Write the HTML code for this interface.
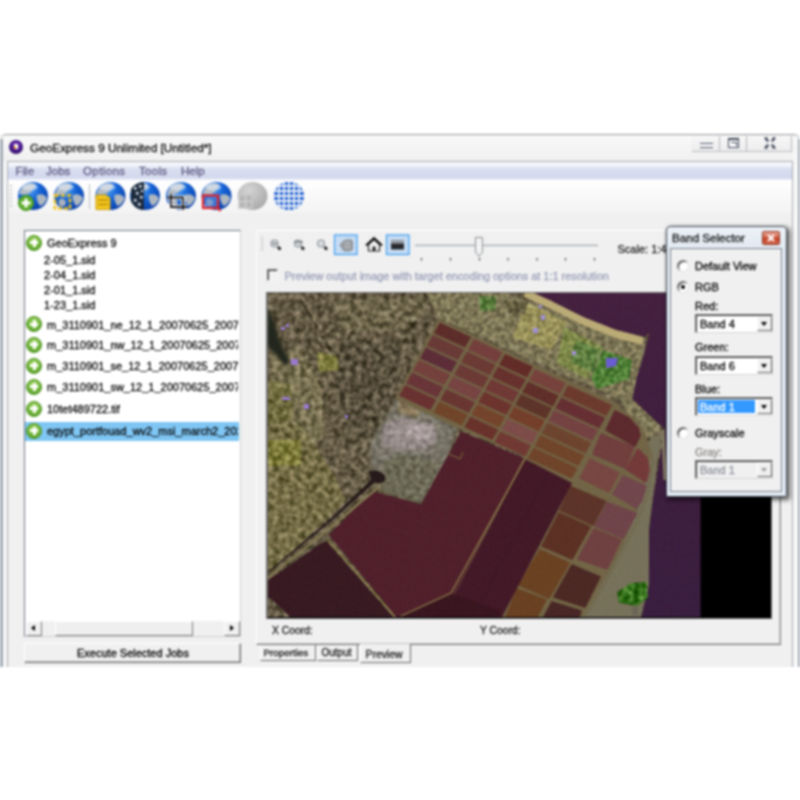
<!DOCTYPE html>
<html><head><meta charset="utf-8"><title>GeoExpress 9 Unlimited</title>
<style>
*{box-sizing:border-box}
html,body{margin:0;padding:0;background:#fff;width:800px;height:800px;overflow:hidden}
body{font-family:"Liberation Sans",sans-serif;font-size:11px;color:#000;position:relative}
.a{position:absolute}
.t{position:absolute;white-space:nowrap;line-height:14px;height:14px;-webkit-text-stroke:0.3px currentColor}
#win{left:0;top:0;width:800px;height:800px}
#winbg{left:0;top:134px;width:800px;height:533px;background:#f0f0f0;border-top:1.500px solid #979ba1;border-radius:6px 6px 0 0}
#blurwrap{position:absolute;left:0;top:0;width:800px;height:800px;filter:blur(0.85px)}
#title{left:2px;top:135.500px;width:796px;height:25px;background:linear-gradient(#f9f9f9,#f0f0f1);border-radius:5px 5px 0 0}
#menubar{left:8px;top:161.500px;width:784px;height:18px;background:linear-gradient(#fbfcfe 0%,#eef1f9 22%,#d9def0 40%,#d3d9ee 85%,#e8ebf6 100%)}
#menubar .t{top:2.500px;font-size:11.5px;color:#5c5a80}
#toolbar{left:8px;top:179.500px;width:784px;height:33.500px;background:linear-gradient(#ffffff,#f3f3f3)}
.capbtn{top:135.500px;height:16px;border-left:1px solid #b4b6ba;background:linear-gradient(#f7f7f7,#ececed)}
#list{left:23.500px;top:230px;width:217.500px;height:406.500px;background:#fff;border:1.500px solid #6e7482;border-right-color:#cfd0d2;border-bottom-color:#cfd0d2}
.li{position:absolute;left:47px;white-space:nowrap;line-height:14px;height:14px;color:#080808;-webkit-text-stroke:0.3px currentColor}
.sub{left:44px}
.ic{position:absolute;left:26px;width:16px;height:16px;border-radius:50%;background:radial-gradient(circle at 50% 35%,#a8dc6a,#5da52a 75%);border:1px solid #4d8f22}
.ic:before{content:"";position:absolute;left:5.500px;top:3px;width:3px;height:8px;background:#fff}
.ic:after{content:"";position:absolute;left:3px;top:5.500px;width:8px;height:3px;background:#fff}
.rad{width:12px;height:12px;border-radius:50%;background:#fff;border:1px solid #7a7a7a;border-right-color:#e2e2e2;border-bottom-color:#e2e2e2;box-shadow:inset 1px 1px 0 #444}
.cmb{width:78px;height:19px;background:#fff;border:1px solid #7a7a7a;border-right-color:#d4d4d4;border-bottom-color:#d4d4d4;box-shadow:inset 1px 1px 0 #404040}
.cbt{width:15px;height:15px;background:#f0f0f0;border:1px solid #fff;border-right-color:#606060;border-bottom-color:#606060}
.cbt:after{content:"";position:absolute;left:3px;top:5px;border:3.5px solid transparent;border-top:4px solid #000;border-bottom:0}
.cbt.dis:after{border-top-color:#9a9a9a}
</style></head><body>
<div id="blurwrap">
<div id="win" class="a">
  <div id="winbg" class="a"></div>
  <div id="title" class="a"></div>
  <!-- app icon -->
  <div class="a" style="left:8.500px;top:139.500px;width:14.500px;height:14.500px;border-radius:50%;background:radial-gradient(circle at 50% 40%,#7a3ac0 0,#4a1a90 45%,#1c0a3c 100%)"></div>
  <div class="a" style="left:14px;top:144px;width:4px;height:5px;background:#f0a020;border-top:2px solid #fff;border-right:2px solid #fff"></div>
  <div class="t" style="left:30px;top:140.500px;font-size:11.8px;color:#0a0a0a">GeoExpress 9 Unlimited [Untitled*]</div>
  <!-- caption buttons -->
  <div class="a capbtn" style="left:691px;width:28px;border-left:none;border-radius:0 0 0 4px"></div>
  <div class="a capbtn" style="left:719px;width:27px"></div>
  <div class="a capbtn" style="left:746px;width:46px;border-right:1px solid #b4b6ba"></div>
  <div class="a" style="left:692px;top:151px;width:100px;height:1px;background:#b9bbbf"></div>
  <div class="a" style="left:700px;top:143px;width:12.500px;height:4.500px;border-top:1.500px solid #3c4356;border-bottom:1.500px solid #3c4356;background:#fff"></div>
  <div class="a" style="left:727.500px;top:138px;width:11.500px;height:9.500px;border:1.500px solid #3c4356;border-top-width:2.500px;background:#fff"></div>
  <div class="a" style="left:731px;top:141.500px;width:5.500px;height:4px;border-top:1.500px solid #3c4356;border-right:1.500px solid #3c4356"></div>
  <svg class="a" style="left:763px;top:137px" width="14" height="12" viewBox="0 0 14 12"><path d="M2.500 1.500 L11.500 10.500 M11.500 1.500 L2.500 10.500" stroke="#3c4356" stroke-width="2.200" fill="none"/><rect x="5" y="4" width="4" height="4" fill="#f4f4f4"/><path d="M1.500 1 h3 M9.500 1 h3 M1.500 11 h3 M9.500 11 h3" stroke="#3c4356" stroke-width="1.400"/></svg>
  <div class="a" style="left:7px;top:160.500px;width:786px;height:1px;background:#a6a8ac"></div>
  <div id="menubar" class="a">
    <div class="t" style="left:7.500px">File</div>
    <div class="t" style="left:38px">Jobs</div>
    <div class="t" style="left:75px;letter-spacing:0.4px">Options</div>
    <div class="t" style="left:131px;letter-spacing:0.3px">Tools</div>
    <div class="t" style="left:173px">Help</div>
  </div>
  <div id="toolbar" class="a"></div>
    <svg class="a" style="left:0;top:180px" width="320" height="34" viewBox="0 0 320 34">
    <defs>
      <radialGradient id="gb" cx="38%" cy="30%" r="75%"><stop offset="0" stop-color="#5aa4f2"/><stop offset="0.45" stop-color="#1565d8"/><stop offset="1" stop-color="#0a3ea8"/></radialGradient>
      <radialGradient id="gg" cx="38%" cy="30%" r="75%"><stop offset="0" stop-color="#d4d4d4"/><stop offset="1" stop-color="#a9a9a9"/></radialGradient>
      <g id="globe">
        <ellipse cx="0" cy="0" rx="15" ry="14" fill="url(#gb)"/>
        <path d="M-13 -5 C-10 -12 -3 -14 2 -12 C4 -9 0 -7 -2 -4 C-5 -1 -10 -1 -14 -2 Z" fill="#b4bcc6"/>
        <path d="M4 -1 C8 -3 12 -1 14 2 C13 6 10 9 7 10 C5 7 3 3 4 -1 Z" fill="#aeb7c0"/>
        <path d="M-9 3 C-6 2 -3 4 -3 7 C-4 10 -7 12 -9 10 C-11 8 -11 5 -9 3 Z" fill="#a9b2bc"/>
        <ellipse cx="-3" cy="-9" rx="8" ry="3.5" fill="#e8f0fa" opacity="0.55"/>
      </g>
    </defs>
    <!-- gripper -->
    <g fill="#b4b8be"><rect x="10" y="5" width="2" height="1.5"/><rect x="10" y="9" width="2" height="1.5"/><rect x="10" y="13" width="2" height="1.5"/><rect x="10" y="17" width="2" height="1.5"/><rect x="10" y="21" width="2" height="1.5"/><rect x="10" y="25" width="2" height="1.5"/></g>
    <use href="#globe" x="33" y="16"/>
    <circle cx="26" cy="23" r="7.5" fill="#5cae2c" stroke="#3f8a1c" stroke-width="1"/>
    <path d="M26 18.5 V27.5 M21.5 23 H30.5" stroke="#fff" stroke-width="3"/>
    <use href="#globe" x="69" y="16"/>
    <rect x="55" y="15.500" width="15" height="13" fill="none" stroke="#f2c41a" stroke-width="2.6" stroke-dasharray="4 2"/>
    <rect x="89" y="4" width="1" height="25" fill="#b9bcc2"/>
    <use href="#globe" x="110.5" y="16"/>
    <path d="M96 15 H106 L110 18 V29.500 H96 Z" fill="#f4c81e" stroke="#c99a10" stroke-width="1"/>
    <path d="M98 20 H108 M98 24.500 H108" stroke="#b98a0c" stroke-width="1.6"/>
    <use href="#globe" x="145" y="16"/>
    <path d="M131 9 C135 3 141 2 144 2 L144 30 C138 30 133 26 131 21 Z" fill="#1c2a3c"/>
    <g fill="#dfe6f0"><rect x="134" y="7" width="2.5" height="2.5"/><rect x="139" y="5" width="2.5" height="2.5"/><rect x="136" y="12" width="2.5" height="2.5"/><rect x="140" y="16" width="2.5" height="2.5"/><rect x="134" y="19" width="2.5" height="2.5"/><rect x="138" y="23" width="2.5" height="2.5"/><rect x="141" y="10" width="2" height="2"/></g>
    <use href="#globe" x="181" y="16"/>
    <path d="M171 13.500 V27 H187 M167 17.500 H183 V30" stroke="#fff" stroke-width="4" fill="none"/>
    <path d="M171 13.500 V27 H187 M167 17.500 H183 V30" stroke="#15181c" stroke-width="1.8" fill="none"/>
    <use href="#globe" x="216.5" y="16"/>
    <rect x="203" y="15.500" width="15" height="12.500" fill="#5a86d8" fill-opacity="0.55" stroke="#e0222a" stroke-width="2.2"/>
    <path d="M218 28 L220.500 31" stroke="#e0222a" stroke-width="2"/>
    <!-- disabled -->
    <ellipse cx="252.5" cy="16" rx="15" ry="14" fill="url(#gg)"/>
    <rect x="239" y="15" width="13" height="13" fill="#b5b5b5" stroke="#c9c9c9" stroke-width="1.5"/>
    <path d="M245.500 15 V28 M239 21.500 H252" stroke="#cfcfcf" stroke-width="1.5"/>
    <!-- grid globe -->
    <ellipse cx="289" cy="16" rx="15" ry="14" fill="#1f5fd0"/>
    <clipPath id="gc"><ellipse cx="289" cy="16" rx="15" ry="14"/></clipPath>
    <g clip-path="url(#gc)" stroke="#e8eef8" stroke-width="1.8"><path d="M274 6 H304 M274 11 H304 M274 16 H304 M274 21 H304 M274 26 H304 M279 2 V30 M284 2 V30 M289 2 V30 M294 2 V30 M299 2 V30"/></g>
  </svg>

  <!-- frame stripes -->
  <div class="a" style="left:0;top:139px;width:2.500px;height:528px;background:#a3abb4"></div>
  <div class="a" style="left:2.500px;top:161px;width:4.500px;height:506px;background:#f7f7f8"></div>
  <div class="a" style="left:7px;top:161px;width:1px;height:506px;background:#a9abae"></div>
  <div class="a" style="left:792px;top:161px;width:1px;height:506px;background:#a9abae"></div>
  <div class="a" style="left:793px;top:152px;width:4.500px;height:515px;background:#f7f7f8"></div>
  <div class="a" style="left:797.500px;top:139px;width:2.500px;height:528px;background:#a3abb4"></div>

  <!-- list -->
  <div id="list" class="a"></div>
  <div class="a" style="left:25px;top:421.500px;width:214px;height:19.500px;background:#7fc6f5"></div>
  <div class="ic" style="top:234.5px"></div><div class="li" style="top:236px">GeoExpress 9</div>
  <div class="li sub" style="top:252.7px">2-05_1.sid</div>
  <div class="li sub" style="top:268px">2-04_1.sid</div>
  <div class="li sub" style="top:283px">2-01_1.sid</div>
  <div class="li sub" style="top:298.3px">1-23_1.sid</div>
  <div class="ic" style="top:316px"></div><div class="li" style="top:317.5px;width:191px;overflow:hidden">m_3110901_ne_12_1_20070625_2007</div>
  <div class="ic" style="top:336.7px"></div><div class="li" style="top:338px;width:191px;overflow:hidden">m_3110901_nw_12_1_20070625_2007</div>
  <div class="ic" style="top:357.5px"></div><div class="li" style="top:358.8px;width:191px;overflow:hidden">m_3110901_se_12_1_20070625_2007</div>
  <div class="ic" style="top:378.5px"></div><div class="li" style="top:380px;width:191px;overflow:hidden">m_3110901_sw_12_1_20070625_2007</div>
  <div class="ic" style="top:400.7px"></div><div class="li" style="top:402px">10tet489722.tif</div>
  <div class="ic" style="top:422.7px"></div><div class="li" style="top:424px;width:191px;overflow:hidden">egypt_portfouad_wv2_msi_march2_202</div>
  <!-- scrollbar -->
  <div class="a" style="left:26px;top:621px;width:214px;height:15px;background:#f0f0f0"></div>
  <div class="a" style="left:26px;top:621px;width:16px;height:15px;background:#f0f0f0;border:1px solid #fff;border-right-color:#7a7a7a;border-bottom-color:#7a7a7a"></div>
  <div class="a" style="left:224px;top:621px;width:16px;height:15px;background:#f0f0f0;border:1px solid #fff;border-right-color:#7a7a7a;border-bottom-color:#7a7a7a"></div>
  <div class="a" style="left:55px;top:621px;width:138px;height:15px;background:#efefef;border:1px solid #fff;border-right-color:#7a7a7a;border-bottom-color:#7a7a7a"></div>
  <div class="a" style="left:31px;top:625px;width:0;height:0;border:3.5px solid transparent;border-right:4px solid #000;border-left:0"></div>
  <div class="a" style="left:230px;top:625px;width:0;height:0;border:3.5px solid transparent;border-left:4px solid #000;border-right:0"></div>
  <!-- execute button -->
  <div class="a" style="left:24px;top:643px;width:217px;height:20px;background:#f0f0f0;border:1px solid #fff;border-right-color:#707070;border-bottom-color:#707070;box-shadow:inset -1px -1px 0 #b4b4b4"></div>
  <div class="t" style="left:77px;top:646px;color:#000">Execute Selected Jobs</div>

  <!-- right panel -->
  <div class="a" style="left:255.500px;top:230px;width:525.500px;height:415px;border:1.800px solid #fff;border-right:1.500px solid #8c8c8c;border-bottom:1.500px solid #787878;background:#f0f0f0;box-shadow:inset -1px -1px 0 #c4c4c4"></div>
    <svg class="a" style="left:256px;top:230px" width="420" height="36" viewBox="256 230 420 36">
    <g fill="#b0b4ba"><rect x="261.5" y="237" width="1.5" height="1.5"/><rect x="261.5" y="240" width="1.5" height="1.5"/><rect x="261.5" y="243" width="1.5" height="1.5"/><rect x="261.5" y="246" width="1.5" height="1.5"/><rect x="261.5" y="249" width="1.5" height="1.5"/></g>
    <g id="mag1"><circle cx="274.5" cy="243.5" r="3.4" fill="#d4d8dc" stroke="#9a9ea4" stroke-width="1.4"/><path d="M272 243.500 H277" stroke="#6a6e74" stroke-width="1"/><path d="M278 247 L280.500 249.500" stroke="#1a1a1a" stroke-width="2.6"/></g>
    <g><circle cx="298" cy="243.5" r="3.4" fill="#d4d8dc" stroke="#9a9ea4" stroke-width="1.4"/><path d="M294 242 H303" stroke="#6a6e74" stroke-width="1.2"/><path d="M301.500 247 L304 249.500" stroke="#1a1a1a" stroke-width="2.6"/></g>
    <g><circle cx="321" cy="243.500" r="3.4" fill="#dcdfe3" stroke="#9a9ea4" stroke-width="1.4"/><path d="M324.500 247 L327 249.500" stroke="#1a1a1a" stroke-width="2.6"/></g>
    <rect x="334.500" y="235" width="22.5" height="19.500" fill="#c6dcf3" stroke="#3d9df4" stroke-width="1.2"/>
    <path d="M340 245 L344 240.500 L350 239.500 L352.500 241 V249.500 L350 251 H344 Z" fill="#9a9ea2" stroke="#7c8084" stroke-width="0.8"/>
    <path d="M346 241 V249 M349 241 V249" stroke="#c9ccd0" stroke-width="0.8"/>
    <path d="M368.500 244.500 V251 H379.500 V244.500 L374 239.500 Z" fill="#f4f4f4" stroke="#222" stroke-width="1.2"/>
    <path d="M366 245.500 L374 238 L382 245.500" fill="none" stroke="#111" stroke-width="2"/>
    <rect x="372.500" y="246.500" width="3" height="4.500" fill="#222"/>
    <rect x="386.500" y="235" width="22.500" height="19.500" fill="#c6dcf3" stroke="#3d9df4" stroke-width="1.2"/>
    <rect x="391" y="240.500" width="13" height="9" fill="#2a2a2e"/>
    <rect x="391" y="240.500" width="13" height="3" fill="#9aa0a8"/>
    <!-- slider -->
    <rect x="415" y="244.500" width="183" height="2.200" fill="#b9bcbf"/><rect x="415" y="246.700" width="183" height="1" fill="#fbfbfb"/>
    <g fill="#2a2a2a"><rect x="421" y="258" width="1" height="2.500"/><rect x="450" y="258" width="1" height="2.500"/><rect x="479" y="258" width="1" height="2.500"/><rect x="507.500" y="258" width="1" height="2.500"/><rect x="536.500" y="258" width="1" height="2.500"/><rect x="565" y="258" width="1" height="2.500"/><rect x="594" y="258" width="1" height="2.500"/></g>
    <path d="M475.500 237.500 H482.500 V252 L479 256.500 L475.500 252 Z" fill="#f2f2f2" stroke="#8a8e94" stroke-width="1"/>
  </svg>

  <div class="a" style="left:266.500px;top:269px;width:11.500px;height:11.500px;background:#f1f1f1;border:1px solid #7a7a7a;border-right-color:#f6f6f6;border-bottom-color:#f6f6f6;box-shadow:inset 1px 1px 0 #4a4a4a"></div>
  <div class="t" style="left:284.500px;top:269px;color:#9a9fb8;font-size:10.92px">Preview output image with target encoding options at 1:1 resolution</div>
  <div class="t" style="left:617.500px;top:242px;color:#222">Scale: 1:4</div>
  <!-- image -->
  <div class="a" style="left:266px;top:291.500px;width:505.500px;height:327px;background:#6e6e6e"></div>
  <div class="a" style="left:268px;top:293px;width:503px;height:325px;overflow:hidden;background:#000">
<svg width="503" height="324" viewBox="267 293 503 324" style="position:absolute;left:0;top:0;display:block">
<defs>
<filter id="nz1" x="0" y="0" width="100%" height="100%" color-interpolation-filters="sRGB"><feTurbulence type="fractalNoise" baseFrequency="0.18" numOctaves="3" seed="3" result="n"/><feColorMatrix in="n" type="matrix" values="1.4 0.15 0 0 -0.3  1.3 0.2 0 0 -0.3  1.2 0.15 0.05 0 -0.235  0 0 0 0 1" result="n2"/><feComposite in="SourceGraphic" in2="n2" operator="arithmetic" k1="0" k2="1" k3="0.46" k4="-0.23"/><feComposite in2="SourceGraphic" operator="in"/></filter>
<filter id="nz2" x="0" y="0" width="100%" height="100%" color-interpolation-filters="sRGB"><feTurbulence type="fractalNoise" baseFrequency="0.5" numOctaves="1" seed="11" result="n0"/><feColorMatrix in="n0" type="matrix" values="1 0 0 0 0  0 1 0 0 0  0 0 1 0 0  0 0 0 0 1" result="n"/><feComposite in="SourceGraphic" in2="n" operator="arithmetic" k1="0" k2="1" k3="0.10" k4="-0.05"/><feComposite in2="SourceGraphic" operator="in"/></filter>
<filter id="soft" x="-10%" y="-10%" width="120%" height="120%"><feGaussianBlur stdDeviation="1.6"/></filter>
<filter id="softnz" x="-10%" y="-10%" width="120%" height="120%" color-interpolation-filters="sRGB"><feGaussianBlur stdDeviation="1.5" result="b"/><feTurbulence type="fractalNoise" baseFrequency="0.2" numOctaves="2" seed="5" result="n0"/><feColorMatrix in="n0" type="matrix" values="1.4 1.2 0 0 -0.78  1.3 1.3 0 0 -0.8  1.3 1.2 0.1 0 -0.85  0 0 0 0 0.2" result="n"/><feComposite in="n" in2="b" operator="atop"/></filter>
<linearGradient id="wg" x1="0" y1="0" x2="0" y2="1"><stop offset="0" stop-color="#45213f"/><stop offset="0.5" stop-color="#3e1e3e"/><stop offset="1" stop-color="#3a1e40"/></linearGradient>
<filter id="nz3" x="0" y="0" width="100%" height="100%" color-interpolation-filters="sRGB"><feTurbulence type="fractalNoise" baseFrequency="0.22" numOctaves="2" seed="9" result="n0"/><feColorMatrix in="n0" type="matrix" values="2.6 0.3 0 0 -0.95  2.4 0.5 0 0 -0.97  1.9 0.4 0.1 0 -0.85  0 0 0 0 0.22" result="n"/><feComposite in="n" in2="SourceGraphic" operator="atop"/></filter>
</defs>
<g filter="url(#nz1)">
<rect x="267" y="293" width="503" height="324" fill="#68614a"/>
<line x1="425" y1="303" x2="404" y2="336" stroke="#35331f" stroke-width="3" stroke-opacity="0.75"/>
<line x1="418" y1="316" x2="368" y2="402" stroke="#35331f" stroke-width="2" stroke-opacity="0.75"/>
<line x1="377" y1="356" x2="344" y2="418" stroke="#35331f" stroke-width="2.5" stroke-opacity="0.75"/>
<line x1="352" y1="330" x2="330" y2="372" stroke="#35331f" stroke-width="2" stroke-opacity="0.75"/>
<line x1="332" y1="392" x2="300" y2="440" stroke="#35331f" stroke-width="2" stroke-opacity="0.75"/>
<line x1="398" y1="350" x2="380" y2="384" stroke="#35331f" stroke-width="2" stroke-opacity="0.75"/>
<line x1="300" y1="300" x2="330" y2="352" stroke="#35331f" stroke-width="2" stroke-opacity="0.75"/>
<line x1="455" y1="296" x2="440" y2="318" stroke="#35331f" stroke-width="2.5" stroke-opacity="0.75"/>
<g filter="url(#soft)">
<polygon points="268.0,355.0 300.0,350.0 318.0,380.0 325.0,430.0 300.0,470.0 268.0,470.0" fill="#7a7454" />
<polygon points="330.0,300.0 420.0,296.0 430.0,310.0 400.0,330.0 340.0,330.0" fill="#706a50" />
<polygon points="340.0,340.0 400.0,345.0 395.0,400.0 370.0,440.0 345.0,430.0 335.0,380.0" fill="#5c5642" />
</g>
<polygon points="267.0,420.0 300.0,425.0 330.0,470.0 345.0,500.0 267.0,575.0" fill="#77724a" />
<polygon points="267.0,440.0 300.0,440.0 300.0,465.0 267.0,466.0" fill="#80803e" />
<polygon points="267.0,380.0 290.0,385.0 292.0,420.0 267.0,425.0" fill="#747244" />
<polygon points="316.0,352.0 336.0,356.0 338.0,370.0 318.0,372.0" fill="#828244" />
</g>
<g filter="url(#nz3)">
<polygon points="505.0,293.0 640.0,345.0 660.0,430.0 640.0,440.0 620.0,400.0 438.0,318.0 425.0,293.0" fill="#7e7656" />
<polygon points="527.0,303.0 566.0,322.0 550.0,350.0 511.0,337.0" fill="#a0985a" />
<polygon points="563.0,327.0 602.0,347.0 586.0,379.0 556.0,363.0" fill="#7d8c44" />
<polygon points="575.0,340.0 600.0,350.0 592.0,372.0 570.0,362.0" fill="#55803a" />
<polygon points="602.0,350.0 631.0,360.0 628.0,379.0 596.0,389.0 590.0,378.0" fill="#41802c" />
<polygon points="478.0,296.0 495.0,297.0 494.0,310.0 479.0,311.0" fill="#4d7a32" />
<polygon points="504.0,300.0 527.0,302.0 524.0,314.0 506.0,313.0" fill="#5c5439" />
</g>
<g filter="url(#softnz)">
<polygon points="397.0,398.0 457.0,426.0 447.0,455.0 420.0,504.0 381.0,490.0 386.0,476.0 371.0,468.0 369.0,445.0 381.0,424.0" fill="#747064" />
<polygon points="381.0,490.0 386.0,476.0 380.0,462.0 400.0,455.0 440.0,462.0 420.0,504.0" fill="#66644e" />
<polygon points="383.0,424.0 400.0,417.0 432.0,424.0 437.0,440.0 425.0,449.0 395.0,451.0 380.0,445.0" fill="#9a8e8e" />
<polygon points="408.0,424.0 430.0,426.0 434.0,436.0 420.0,440.0 406.0,436.0" fill="#b4a6aa" />
<polygon points="398.0,401.0 420.0,410.0 416.0,418.0 396.0,412.0" fill="#8c7856" />
</g>
<g filter="url(#soft)">
<polygon points="266.0,308.0 269.0,310.0 273.0,322.0 279.0,342.0 289.0,361.0 285.0,367.0 274.0,354.0 266.0,346.0" fill="#23251a" />
</g>
<rect x="290" y="359" width="7" height="6" fill="#9a7ad0"/>
<rect x="280" y="327" width="4" height="3" fill="#9a7ad0"/>
<rect x="303" y="404" width="5" height="5" fill="#9a7ad0"/>
<rect x="281" y="397" width="8" height="3" fill="#9a7ad0"/>
<rect x="344" y="415" width="3" height="3" fill="#9a7ad0"/>
<rect x="285" y="324" width="3" height="3" fill="#9a7ad0"/>
<polygon points="605.0,358.0 617.0,358.0 615.0,366.0 605.0,368.0" fill="#6a5cd2" />
<rect x="540" y="315" width="4" height="5" fill="#a090d8"/>
<rect x="532" y="328" width="5" height="5" fill="#a090d8"/>
<rect x="571" y="351" width="4" height="4" fill="#a090d8"/>
<rect x="538" y="305" width="3" height="3" fill="#a090d8"/>
<g filter="url(#nz2)">
<polygon points="529.0,293.0 550.0,301.0 582.0,317.0 615.0,330.0 644.0,337.0 648.0,333.0 644.0,350.0 636.0,376.0 631.0,399.0 648.0,415.0 664.0,430.0 660.0,450.0 652.0,497.0 648.0,530.0 648.0,585.0 640.0,617.0 770.0,617.0 770.0,293.0" fill="url(#wg)" />
</g>
<polyline points="524.0,293.0 550.0,305.0 582.0,321.0 615.0,334.0 642.0,341.0" fill="none" stroke="#bbab76" stroke-width="7.5" stroke-linejoin="round"/>
<polyline points="662.0,430.0 664.0,480.0" fill="none" stroke="#8c8468" stroke-width="3"/>
<g filter="url(#nz2)">
<polygon points="648.0,440.0 662.0,432.0 656.0,465.0 652.0,497.0 648.0,530.0 648.0,585.0 640.0,617.0 578.0,617.0 600.0,585.0 622.0,545.0 640.0,500.0" fill="#77715a" />
<polygon points="437.5,318.6 617.3,403.5 620.0,408.0 634.0,418.0 644.0,432.0 650.0,455.0 640.0,500.0 622.0,545.0 600.0,585.0 582.0,617.0 440.0,617.0 520.0,455.0 455.0,428.0 393.4,398.2" fill="#726546" />
<polygon points="438.8,322.5 470.0,336.9 464.0,347.6 432.8,333.3" fill="#5d2d2a" />
<polygon points="431.8,335.0 463.1,349.4 457.1,360.1 425.9,345.8" fill="#693a37" />
<polygon points="424.9,347.5 456.1,361.9 450.2,372.6 418.9,358.3" fill="#5d2d38" />
<polygon points="418.0,360.0 449.2,374.4 443.2,385.2 412.0,370.8" fill="#74413c" />
<polygon points="411.0,372.5 442.3,386.9 436.3,397.7 405.1,383.3" fill="#693538" />
<polygon points="404.1,385.0 435.3,399.4 429.4,410.2 398.1,395.8" fill="#693231" />
<polygon points="472.9,339.0 501.6,352.2 495.6,362.9 467.0,349.7" fill="#743f3c" />
<polygon points="466.0,351.5 494.6,364.7 488.7,375.4 460.0,362.3" fill="#6c3a34" />
<polygon points="459.1,364.0 487.7,377.2 481.7,387.9 453.1,374.8" fill="#6c3a35" />
<polygon points="452.1,376.5 480.8,389.7 474.8,400.4 446.2,387.3" fill="#774442" />
<polygon points="445.2,389.0 473.8,402.2 467.9,412.9 439.2,399.8" fill="#693631" />
<polygon points="438.3,401.5 466.9,414.7 460.9,425.4 432.3,412.3" fill="#70452a" />
<polygon points="504.0,354.0 531.9,366.8 526.0,377.6 498.0,364.7" fill="#622c27" />
<polygon points="497.0,366.5 525.0,379.4 519.0,390.1 491.1,377.2" fill="#67312d" />
<polygon points="490.1,379.0 518.1,391.9 512.1,402.6 484.1,389.7" fill="#703935" />
<polygon points="483.2,391.5 511.1,404.4 505.2,415.1 477.2,402.3" fill="#6c342e" />
<polygon points="476.2,404.0 504.2,416.9 498.3,427.6 470.3,414.8" fill="#74442b" />
<polygon points="469.3,416.5 497.3,429.4 491.3,440.1 463.3,427.3" fill="#69322b" />
<polygon points="533.9,368.9 564.8,383.1 558.8,393.9 527.9,379.7" fill="#77423c" />
<polygon points="527.0,381.4 557.8,395.6 551.9,406.4 521.0,392.2" fill="#602f29" />
<polygon points="520.0,393.9 550.9,408.1 544.9,418.9 514.1,404.7" fill="#5d3429" />
<polygon points="513.1,406.4 544.0,420.6 538.0,431.4 507.1,417.2" fill="#743f2b" />
<polygon points="506.2,418.9 537.0,433.1 531.1,443.9 500.2,429.7" fill="#7d4c49" />
<polygon points="499.2,431.4 530.1,445.6 524.2,456.4 493.3,442.2" fill="#713933" />
<polygon points="567.1,385.1 611.2,405.3 605.2,416.1 561.2,395.8" fill="#6c3a2e" />
<polygon points="560.2,397.6 604.2,417.8 598.3,428.6 554.2,408.3" fill="#662f33" />
<polygon points="553.2,410.1 597.3,430.3 591.3,441.1 547.3,420.8" fill="#744242" />
<polygon points="546.3,422.6 590.4,442.8 584.4,453.6 540.4,433.3" fill="#6d442e" />
<polygon points="539.4,435.1 583.4,455.3 577.5,466.1 533.4,445.8" fill="#70452a" />
<polygon points="532.5,447.6 576.5,467.9 570.6,478.6 526.5,458.3" fill="#6f442a" />
<polygon points="614.0,411.0 628.0,418.0 637.0,428.0 639.0,436.0 634.0,446.0 605.0,430.0" fill="#5d2a2e" stroke="#5d2a2e" stroke-width="1.6" stroke-linejoin="round"/>
<polygon points="600.0,434.0 633.0,447.0 624.0,468.0 592.0,454.0" fill="#713f3e" stroke="#713f3e" stroke-width="1.6" stroke-linejoin="round"/>
<polygon points="637.0,449.0 646.0,458.0 648.0,470.0 645.0,482.0 625.0,469.0" fill="#743a3a" stroke="#743a3a" stroke-width="1.6" stroke-linejoin="round"/>
<polygon points="589.0,459.0 618.0,473.0 608.0,492.0 579.0,478.0" fill="#774742" stroke="#774742" stroke-width="1.6" stroke-linejoin="round"/>
<polygon points="622.0,476.0 645.0,486.0 641.0,500.0 635.0,508.0 612.0,494.0" fill="#71474c" stroke="#71474c" stroke-width="1.6" stroke-linejoin="round"/>
<polygon points="569.5,486.5 604.5,501.5 592.0,525.0 559.0,510.0" fill="#5d3429" stroke="#5d3429" stroke-width="1.6" stroke-linejoin="round"/>
<polygon points="606.5,502.5 635.5,513.5 622.0,538.0 594.0,526.0" fill="#6f4449" stroke="#6f4449" stroke-width="1.6" stroke-linejoin="round"/>
<polygon points="558.0,513.0 589.0,527.0 571.0,559.0 541.0,546.0" fill="#5c3124" stroke="#5c3124" stroke-width="1.6" stroke-linejoin="round"/>
<polygon points="593.0,529.0 620.0,540.0 606.0,569.0 577.0,559.0" fill="#6f4141" stroke="#6f4141" stroke-width="1.6" stroke-linejoin="round"/>
<polygon points="539.0,550.0 568.0,563.0 548.0,598.0 518.0,585.0" fill="#6a4222" stroke="#6a4222" stroke-width="1.6" stroke-linejoin="round"/>
<polygon points="571.0,565.0 599.0,577.0 584.0,607.0 553.0,597.0" fill="#4c2924" stroke="#4c2924" stroke-width="1.6" stroke-linejoin="round"/>
<polygon points="516.0,589.0 545.0,600.0 536.0,617.0 505.0,617.0" fill="#694122" stroke="#694122" stroke-width="1.6" stroke-linejoin="round"/>
<polygon points="551.0,602.0 580.0,611.0 578.0,617.0 543.0,617.0" fill="#482726" stroke="#482726" stroke-width="1.6" stroke-linejoin="round"/>
<polygon points="524.0,459.0 571.0,483.0 501.0,617.0 441.5,617.0" fill="#431927" />
<polygon points="460.0,431.0 523.0,458.0 441.0,617.0 395.0,617.0 327.5,535.0 371.0,491.0 420.0,504.0 447.0,455.0" fill="#50202b" />
<polygon points="450.0,593.0 500.0,611.0 497.0,617.0 395.0,617.0 400.0,616.0" fill="#391620" />
<polygon points="321.0,542.5 326.0,541.5 392.5,617.0 289.0,617.0 269.0,598.0 267.0,598.0 267.0,580.0" fill="#381a22" />
</g>
<g filter="url(#nz1)">
<polygon points="616.0,592.0 630.0,583.0 646.0,582.0 647.0,598.0 636.0,606.0 618.0,603.0" fill="#38761f" />
</g>
<rect x="631" y="607" width="6" height="8" fill="#6a6458"/>
<polyline points="646.0,440.0 652.0,460.0 646.0,497.0 636.0,522.0 619.0,556.0 600.0,590.0 584.0,617.0" fill="none" stroke="#6f6648" stroke-width="1.3"/>
<line x1="548" y1="472" x2="472" y2="617" stroke="#3c1628" stroke-width="1"/>
<polyline points="327.0,540.0 394.0,617.0" fill="none" stroke="#94854c" stroke-width="1.2"/>
<polyline points="524.0,459.0 450.0,593.0 400.0,616.0" fill="none" stroke="#94854c" stroke-width="1.2"/>
<polyline points="448.0,454.0 459.0,459.0 462.0,452.0" fill="none" stroke="#80703f" stroke-width="1"/>
<polygon points="368.0,471.0 376.0,470.5 384.0,475.0 384.0,480.5 378.0,483.5 373.5,482.5 330.0,521.3 267.0,573.3 267.0,571.5 328.5,519.8 370.0,480.0" fill="#261a1a" />
<polyline points="378.0,487.0 330.0,527.0 267.0,578.0" fill="none" stroke="#857a50" stroke-width="2"/>
<rect x="699.5" y="293" width="71" height="324" fill="#000"/>
</svg>
  </div>
  <div class="t" style="left:272px;top:623.500px;color:#222;font-size:10.3px">X Coord:</div>
  <div class="t" style="left:480px;top:623.500px;color:#222;font-size:10.3px">Y Coord:</div>
  <!-- tabs -->
  <div class="a" style="left:260px;top:645px;width:56px;height:16px;background:#f0f0f0;border:1px solid #fff;border-right-color:#6a6a6a;border-bottom-color:#6a6a6a;border-top:none"></div>
  <div class="t" style="left:263.500px;top:645.500px;color:#222;font-size:9.8px">Properties</div>
  <div class="a" style="left:317px;top:645px;width:41px;height:16px;background:#f0f0f0;border:1px solid #fff;border-right-color:#6a6a6a;border-bottom-color:#6a6a6a;border-top:none"></div>
  <div class="t" style="left:321.500px;top:645.500px;color:#222;font-size:10px">Output</div>
  <div class="a" style="left:360px;top:644px;width:51px;height:19px;background:#f0f0f0;border:1px solid #fff;border-right-color:#6a6a6a;border-bottom-color:#6a6a6a;border-top:none"></div>
  <div class="t" style="left:365.500px;top:647.500px;color:#222;font-size:10.4px">Preview</div>

    <!-- Band Selector dialog -->
  <div class="a" style="left:666px;top:226px;width:120.500px;height:271px;background:linear-gradient(#edf2f7 0,#dfe7f0 24px,#dfe7f0 100%);border:1.500px solid #454c58;border-radius:4px 4px 1px 1px;box-shadow:2px 2px 4px 1px rgba(0,0,0,.6)"></div>
  <div class="a" style="left:670px;top:248px;width:112px;height:244px;background:#f0f0f0;border:1px solid #6c7684;box-shadow:0 0 0 1px #f4f7fb"></div>
  <div class="t" style="left:672px;top:231px;font-size:11.6px;color:#111">Band Selector</div>
  <div class="a" style="left:762px;top:231px;width:18px;height:14px;border-radius:2px;background:linear-gradient(#e9a595,#cf5a40 50%,#c03e22 51%,#d7694c);border:1px solid #8a3424"></div>
  <svg class="a" style="left:766px;top:233px" width="10" height="10" viewBox="0 0 10 10"><path d="M2 2 L8 8 M8 2 L2 8" stroke="#fff" stroke-width="2.2"/></svg>
  <!-- radios -->
  <div class="a rad" style="left:677px;top:260px"></div>
  <div class="t" style="left:695px;top:259px">Default View</div>
  <div class="a rad" style="left:677px;top:281px"></div><div class="a" style="left:681px;top:285px;width:4px;height:4px;border-radius:50%;background:#000"></div>
  <div class="t" style="left:695px;top:280px">RGB</div>
  <div class="t" style="left:695px;top:299px">Red:</div>
  <div class="a cmb" style="left:695px;top:314px"></div><div class="a cbt" style="left:757px;top:316px"></div>
  <div class="t" style="left:700px;top:317px">Band 4</div>
  <div class="t" style="left:695px;top:340px">Green:</div>
  <div class="a cmb" style="left:695px;top:356px"></div><div class="a cbt" style="left:757px;top:358px"></div>
  <div class="t" style="left:700px;top:359px">Band 6</div>
  <div class="t" style="left:695px;top:382px">Blue:</div>
  <div class="a cmb" style="left:695px;top:397px"></div><div class="a cbt" style="left:757px;top:399px"></div>
  <div class="a" style="left:698px;top:400px;width:57px;height:13px;background:#3399ff"></div>
  <div class="t" style="left:700px;top:400px;color:#fff">Band 1</div>
  <div class="a rad" style="left:677px;top:427px"></div>
  <div class="t" style="left:695px;top:426px">Grayscale</div>
  <div class="t" style="left:695px;top:445px;color:#8c8a86">Gray:</div>
  <div class="a cmb" style="left:695px;top:460px;background:#f0f0f0"></div><div class="a cbt dis" style="left:757px;top:462px"></div>
  <div class="t" style="left:700px;top:463px;color:#8f939d">Band 1</div>

</div>
</div>
</body></html>
